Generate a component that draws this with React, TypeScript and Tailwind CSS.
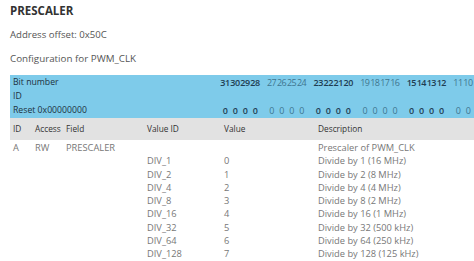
const groups = [
  [31, 30, 29, 28],
  [27, 26, 25, 24],
  [23, 22, 21, 20],
  [19, 18, 17, 16],
  [15, 14, 13, 12],
  [11, 10, 9, 8],
  [7, 6, 5, 4],
  [3, 2, 1, 0],
];

const rows = [
  { id: "A", access: "RW", field: "PRESCALER", vid: "", val: "", desc: "Prescaler of PWM_CLK" },
  { vid: "DIV_1", val: "0", desc: "Divide by 1 (16 MHz)" },
  { vid: "DIV_2", val: "1", desc: "Divide by 2 (8 MHz)" },
  { vid: "DIV_4", val: "2", desc: "Divide by 4 (4 MHz)" },
  { vid: "DIV_8", val: "3", desc: "Divide by 8 (2 MHz)" },
  { vid: "DIV_16", val: "4", desc: "Divide by 16 (1 MHz)" },
  { vid: "DIV_32", val: "5", desc: "Divide by 32 (500 kHz)" },
  { vid: "DIV_64", val: "6", desc: "Divide by 64 (250 kHz)" },
  { vid: "DIV_128", val: "7", desc: "Divide by 128 (125 kHz)" },
];

const cols = "grid grid-cols-[22px_31px_81px_77px_94px_1fr] pl-[3px]";

function BitRow({ label, cell }: { label: string; cell: (b: number) => string }) {
  return (
    <div className="flex h-[14px] items-center">
      <div className="w-[210px] shrink-0 pl-[3px] text-[8.7px] text-[#1d3140]">{label}</div>
      {groups.map((g, gi) => (
        <div
          key={gi}
          className={
            "flex w-[46.6px] shrink-0 text-[9px] tracking-[-0.5px] " +
            (gi % 2 === 0 ? "font-semibold text-[#1f3d52]" : "text-[#3f7690]")
          }
        >
          {g.map((b) => (
            <span key={b} className="w-[10px] text-center">
              {cell(b)}
            </span>
          ))}
        </div>
      ))}
    </div>
  );
}

export default function App() {
  return (
    <div
      className="h-[261px] w-[474px] overflow-hidden bg-white pl-[10px] text-[#555]"
      style={{ fontFamily: '"Open Sans", "Liberation Sans", sans-serif' }}
    >
      <h1 className="pt-[4px] text-[11.5px] font-bold leading-[14px] text-[#333]">PRESCALER</h1>
      <p className="mt-[10px] text-[9.6px] leading-[14px]">Address offset: 0x50C</p>
      <p className="mt-[10px] text-[9.8px] leading-[14px]">Configuration for PWM_CLK</p>

      <div className="mt-[9px] w-[600px]">
        <div className="bg-[#7ecbea] py-[0.5px]">
          <BitRow label="Bit number" cell={(b) => String(b)} />
          <BitRow label="ID" cell={() => ""} />
          <BitRow label="Reset 0x00000000" cell={() => "0"} />
        </div>
        <div className={cols + " h-[22px] items-center bg-[#e2e2e2] text-[8.3px] text-[#333]"}>
          <span>ID</span>
          <span>Access</span>
          <span>Field</span>
          <span>Value ID</span>
          <span>Value</span>
          <span>Description</span>
        </div>
        <div className="border-b-2 border-[#ececec] pt-[1px] text-[9.3px] text-[#777]">
          {rows.map((r, i) => (
            <div key={i} className={cols + " h-[13.3px] items-center"}>
              <span>{r.id ?? ""}</span>
              <span>{r.access ?? ""}</span>
              <span>{r.field ?? ""}</span>
              <span>{r.vid}</span>
              <span>{r.val}</span>
              <span>{r.desc}</span>
            </div>
          ))}
        </div>
      </div>
    </div>
  );
}
